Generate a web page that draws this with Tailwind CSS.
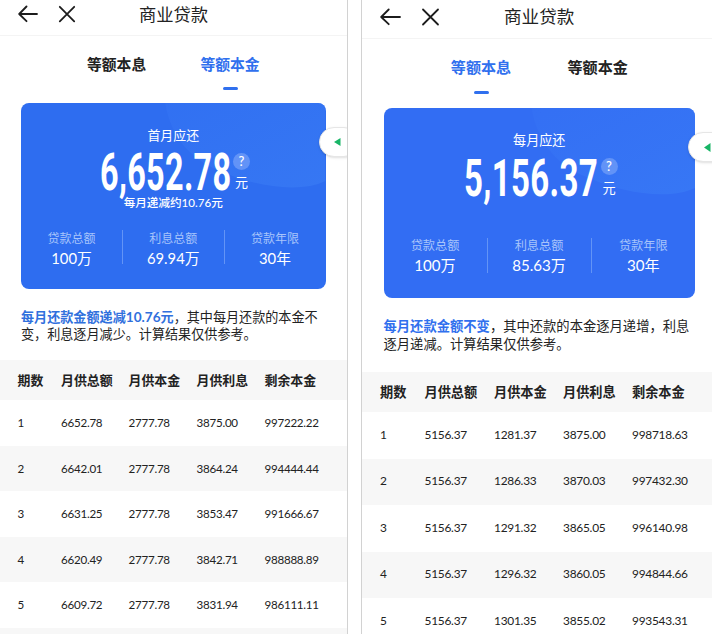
<!DOCTYPE html>
<html lang="zh-CN">
<head>
<meta charset="utf-8">
<title>商业贷款</title>
<script src="https://cdn.jsdelivr.net/npm/@tailwindcss/browser@4"></script>
</head>
<body class="w-[724px] h-[638px] overflow-hidden bg-white font-['Lato','Noto_Sans_CJK_SC',sans-serif] text-[#222]">
<div class="flex h-[634px]">

  <!-- Equal principal -->
  <section class="relative w-[348px] h-[634px] shrink-0 overflow-hidden border-r border-[#d2d2d2]">
    <header class="flex h-[36px] items-center border-b border-[#f4f4f4] pl-[18px] pb-[5px]">
      <svg class="w-[20px] h-[18px] -mt-[2px] shrink-0" viewBox="0 0 20 18" fill="none" stroke="#1c1c1c" stroke-width="1.8" stroke-linecap="round" stroke-linejoin="round"><path d="M19 9H1.5M8.5 1.5L1.2 9l7.3 7.2"/></svg>
      <svg class="ml-[20px] w-[18px] h-[18px] -mt-[2px] shrink-0" viewBox="0 0 18 18" fill="none" stroke="#1c1c1c" stroke-width="1.8" stroke-linecap="round"><path d="M1.8 1.8l14.4 14.6M16.2 1.8L1.8 16.4"/></svg>
      <h1 class="ml-[63px] text-[17.3px] leading-[30px] whitespace-nowrap">商业贷款</h1>
    </header>
    <nav class="flex h-[67px] pl-[87px] pt-[15px] gap-[53px] text-[14.8px] leading-[26px] font-bold">
      <span class="w-[60px] whitespace-nowrap">等额本息</span>
      <span class="flex w-[60px] flex-col items-center whitespace-nowrap text-[#3070ee]">等额本金<i class="mt-[10px] h-[3px] w-[15px] rounded-full bg-[#3070ee]"></i></span>
    </nav>
    <div class="relative ml-[21px] h-[186px] w-[304.5px] overflow-hidden rounded-[8px] bg-[#2e6df0] text-white">
      <svg class="absolute inset-0 h-full w-full" viewBox="0 0 304 186"><defs><linearGradient id="ga" x1="0" y1="0" x2="1" y2="1"><stop offset="0" stop-color="#3575f4" stop-opacity=".45"/><stop offset="1" stop-color="#3677f3"/></linearGradient></defs><path d="M144 0C150 35 170 58 204 70C230 82 278 91 304 78V0Z" fill="url(#ga)"/></svg>
      <div class="relative flex flex-col items-center">
        <p class="mt-[22px] text-[12.9px] leading-[20px]">首月应还</p>
        <div class="flex h-[48px] w-full pl-[79px] pt-[6px]">
          <span class="h-[38px] w-[132px] shrink-0"><span class="block w-fit origin-left scale-x-[0.635] font-[Roboto] text-[51px] leading-[43px] font-bold tracking-[0.5px] whitespace-nowrap">6,652.78</span></span>
          <span class="ml-[1px] flex w-[17px] flex-col items-center pt-[2px]">
            <b class="flex h-[17px] w-[17px] shrink-0 items-center justify-center rounded-full bg-[#6293f7] text-[13px] leading-none font-medium">?</b>
            <span class="text-[13px] leading-[24px]">元</span>
          </span>
        </div>
        <p class="text-[11.6px] leading-[19px] font-medium">每月递减约10.76元</p>
        <dl class="mt-[18px] flex w-full h-[34px] text-center">
          <div class="w-[102px] border-r border-[#6394f6]"><dt class="pt-px text-[12px] leading-[16px] text-[#a7c4fb]">贷款总额</dt><dd class="text-[14.8px] leading-[22px]">100万</dd></div>
          <div class="w-[101.5px] border-r border-[#6394f6]"><dt class="pt-px text-[12px] leading-[16px] text-[#a7c4fb]">利息总额</dt><dd class="text-[14.8px] leading-[22px]">69.94万</dd></div>
          <div class="w-[101px]"><dt class="pt-px text-[12px] leading-[16px] text-[#a7c4fb]">贷款年限</dt><dd class="text-[14.8px] leading-[22px]">30年</dd></div>
        </dl>
      </div>
    </div>
    <p class="ml-[21px] mt-[20px] h-[51px] text-[13.1px] leading-[17.3px] whitespace-nowrap"><b class="text-[#3070dd]">每月还款金额递减<span class="text-[13.6px]">10.76</span>元</b>，其中每月还款的本金不<br>变，利息逐月减少。计算结果仅供参考。</p>
    <div id="principal"></div>
    <div class="absolute top-[127px] right-[-12px] flex h-[30px] w-[40px] items-center rounded-full border border-[#e6e6e6] bg-white pl-[14px] shadow-sm"><svg class="h-[8px] w-[7px]" viewBox="0 0 7 8"><path d="M0 4L6.5 0v8z" fill="#18b566"/></svg></div>
  </section>

  <!-- Equal installments -->
  <section class="relative ml-[13px] w-[351px] h-[634px] shrink-0 overflow-hidden border-l border-[#d2d2d2]">
    <header class="flex h-[39px] items-center border-b border-[#f4f4f4] pl-[18px] pb-[5px]">
      <svg class="w-[21px] h-[18px] shrink-0" viewBox="0 0 21 18" fill="none" stroke="#1c1c1c" stroke-width="1.8" stroke-linecap="round" stroke-linejoin="round"><path d="M20 9H1.5M8.7 1.5L1.2 9l7.5 7.2"/></svg>
      <svg class="ml-[20px] w-[19px] h-[18px] shrink-0" viewBox="0 0 19 18" fill="none" stroke="#1c1c1c" stroke-width="1.8" stroke-linecap="round"><path d="M2 1.5l15 15M17 1.5l-15 15"/></svg>
      <h1 class="ml-[64px] text-[17.6px] leading-[30px] whitespace-nowrap">商业贷款</h1>
    </header>
    <nav class="flex h-[69px] pl-[88.5px] pt-[15px] gap-[56px] text-[15.1px] leading-[26px] font-bold">
      <span class="flex w-[61px] flex-col items-center whitespace-nowrap text-[#3070ee]">等额本息<i class="mt-[11px] h-[3px] w-[15px] rounded-full bg-[#3070ee]"></i></span>
      <span class="w-[61px] whitespace-nowrap">等额本金</span>
    </nav>
    <div class="relative ml-[21.5px] h-[190px] w-[311.5px] overflow-hidden rounded-[8px] bg-[#326df3] text-white">
      <svg class="absolute inset-0 h-full w-full" viewBox="0 0 304 186" preserveAspectRatio="none"><defs><linearGradient id="gb" x1="0" y1="0" x2="1" y2="1"><stop offset="0" stop-color="#3673f5" stop-opacity=".45"/><stop offset="1" stop-color="#3777f5"/></linearGradient></defs><path d="M144 0C150 35 170 58 204 70C230 82 278 91 304 78V0Z" fill="url(#gb)"/></svg>
      <div class="relative flex flex-col items-center">
        <p class="mt-[22px] text-[13.1px] leading-[20px]">每月应还</p>
        <div class="flex h-[48px] w-full pl-[80px] pt-[7px]">
          <span class="h-[38px] w-[134px] shrink-0"><span class="block w-fit origin-left scale-x-[0.635] font-[Roboto] text-[52px] leading-[43px] font-bold tracking-[0.5px] whitespace-nowrap">5,156.37</span></span>
          <span class="ml-[3px] flex w-[17px] flex-col items-center pt-[1px]">
            <b class="flex h-[17px] w-[17px] shrink-0 items-center justify-center rounded-full bg-[#6293f7] text-[13px] leading-none font-medium">?</b>
            <span class="text-[13.2px] leading-[26px]">元</span>
          </span>
        </div>
        <dl class="mt-[40px] flex w-full h-[35px] text-center">
          <div class="w-[104px] border-r border-[#6394f6]"><dt class="text-[12.2px] leading-[16px] text-[#a7c4fb]">贷款总额</dt><dd class="text-[15.1px] leading-[23px]">100万</dd></div>
          <div class="w-[104px] border-r border-[#6394f6]"><dt class="text-[12.2px] leading-[16px] text-[#a7c4fb]">利息总额</dt><dd class="text-[15.1px] leading-[23px]">85.63万</dd></div>
          <div class="w-[103.5px]"><dt class="text-[12.2px] leading-[16px] text-[#a7c4fb]">贷款年限</dt><dd class="text-[15.1px] leading-[23px]">30年</dd></div>
        </dl>
      </div>
    </div>
    <p class="ml-[21.5px] mt-[20px] h-[54px] text-[13.3px] leading-[17.6px] whitespace-nowrap"><b class="text-[#3070ee]">每月还款金额不变</b>，其中还款的本金逐月递增，利息<br>逐月递减。计算结果仅供参考。</p>
    <div id="installment"></div>
    <div class="absolute top-[132px] right-[-17px] flex h-[30px] w-[41px] items-center rounded-full border border-[#e6e6e6] bg-white pl-[15px] shadow-sm"><svg class="h-[9px] w-[7px]" viewBox="0 0 7 9"><path d="M0 4.5L6.5 0v9z" fill="#18b566"/></svg></div>
  </section>
</div>

<script>
const columns = ['期数', '月供总额', '月供本金', '月供利息', '剩余本金'];
function table(id, grid, headClass, rowClass, rows) {
  const line = (cells, cls) => `<div class="${grid} ${cls}">${cells.map(c => `<span>${c}</span>`).join('')}</div>`;
  document.getElementById(id).innerHTML = line(columns, headClass) +
    rows.map((r, i) => line(r, rowClass + (i % 2 ? ' bg-[#f7f7f7]' : ' bg-white'))).join('');
}
table('principal',
  'grid grid-cols-[43.5px_67.5px_68px_68px_1fr] items-center pl-[17.5px] whitespace-nowrap',
  'h-[40px] bg-[#f7f7f7] pt-[2px] text-[12.9px] font-bold',
  'h-[45.6px] text-[11.6px] tracking-[-0.25px]',
  [['1','6652.78','2777.78','3875.00','997222.22'],
   ['2','6642.01','2777.78','3864.24','994444.44'],
   ['3','6631.25','2777.78','3853.47','991666.67'],
   ['4','6620.49','2777.78','3842.71','988888.89'],
   ['5','6609.72','2777.78','3831.94','986111.11'],
   ['','','','','']]);
table('installment',
  'grid grid-cols-[44.5px_69.5px_69px_69px_1fr] items-center pl-[18px] whitespace-nowrap',
  'h-[40px] bg-[#f7f7f7] pt-[2px] text-[13.2px] font-bold',
  'h-[46.5px] pb-[1px] text-[11.9px] tracking-[-0.25px]',
  [['1','5156.37','1281.37','3875.00','998718.63'],
   ['2','5156.37','1286.33','3870.03','997432.30'],
   ['3','5156.37','1291.32','3865.05','996140.98'],
   ['4','5156.37','1296.32','3860.05','994844.66'],
   ['5','5156.37','1301.35','3855.02','993543.31']]);
</script>
</body>
</html>
